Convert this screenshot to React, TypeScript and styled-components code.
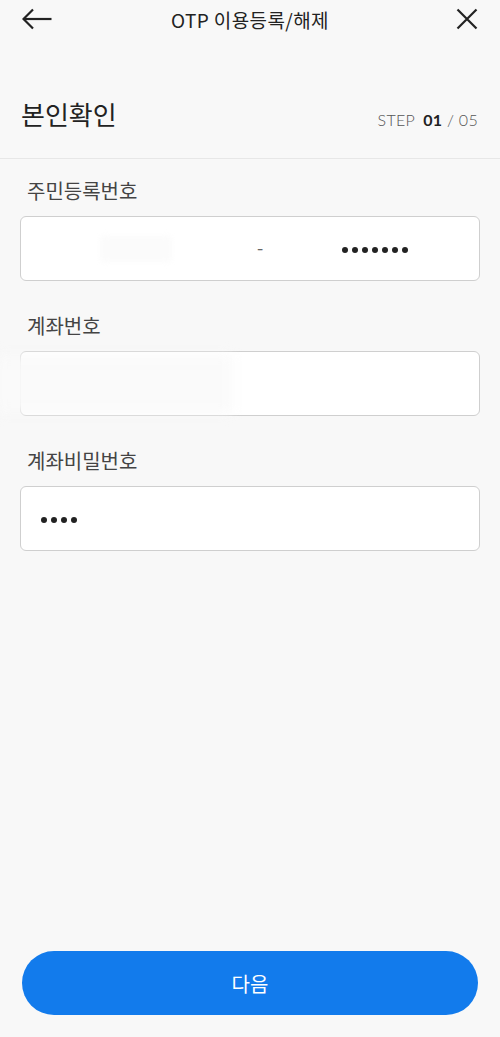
import styled, { createGlobalStyle } from 'styled-components'

const GlobalStyle = createGlobalStyle`
  * { box-sizing: border-box; }
  body {
    margin: 0;
    background: #f8f8f8;
    font-family: 'Noto Sans CJK KR', 'Noto Sans', sans-serif;
    color: #222;
  }
`

const Page = styled.div`
  min-height: 100vh;
  display: flex;
  flex-direction: column;
`

const Header = styled.header`
  height: 38px;
  display: grid;
  grid-template-columns: 1fr auto 1fr;
  align-items: center;
  padding: 0 22px;
`

const IconButton = styled.button<{ right?: boolean }>`
  border: 0;
  background: none;
  padding: 0;
  display: flex;
  justify-self: ${({ right }) => (right ? 'end' : 'start')};
  color: #222;
`

const Title = styled.h1`
  margin: 0;
  font-size: 19px;
  font-weight: 400;
  letter-spacing: 0.4px;
`

const TitleRow = styled.div`
  height: 121px;
  display: flex;
  align-items: flex-end;
  justify-content: space-between;
  padding: 0 22px 27px 21px;
  border-bottom: 1px solid #e7e7e7;
`

const PageTitle = styled.h2`
  margin: 0;
  font-size: 26px;
  font-weight: 400;
  line-height: 34px;
`

const Step = styled.span`
  font-family: 'Lato', 'Noto Sans', sans-serif;
  font-size: 16px;
  font-weight: 300;
  letter-spacing: 0.3px;
  color: #555;
  line-height: 20px;
  margin-bottom: 1px;

  & b {
    color: #222;
    font-weight: 700;
    margin-left: 8px;
  }
`

const Form = styled.div`
  padding: 19px 20px 0;
  display: flex;
  flex-direction: column;
  gap: 32px;
`

const Field = styled.div`
  display: flex;
  flex-direction: column;
  gap: 12px;
`

const Label = styled.label`
  font-size: 20px;
  line-height: 26px;
  color: #444;
  padding-left: 7px;
`

const InputBox = styled.div<{ split?: boolean }>`
  position: relative;
  height: 65px;
  background: #fff;
  border: 1px solid #cfcfcf;
  border-radius: 6px;
  display: ${({ split }) => (split ? 'grid' : 'flex')};
  grid-template-columns: 229px 20px 1fr;
  align-items: center;
  padding: ${({ split }) => (split ? '0' : '0 20px')};
`

const Cell = styled.div`
  display: flex;
  justify-content: center;
  align-items: center;
`

const Dash = styled.span`
  text-align: center;
  color: #666;
  font-size: 18px;
  margin-top: -4px;
`

const Masked = styled.span`
  width: 72px;
  height: 26px;
  border-radius: 4px;
  background: #fbfbfb;
  filter: blur(3px);
`

const Dots = styled.span`
  display: flex;
  gap: 4px;
  margin-top: 3px;
`

const Dot = styled.span`
  width: 6px;
  height: 6px;
  border-radius: 50%;
  background: #222;
`

const Smear = styled.div`
  position: absolute;
  left: -24px;
  top: 3px;
  width: 235px;
  height: 58px;
  background: rgba(250, 250, 250, 0.9);
  filter: blur(6px);
`

const Footer = styled.div`
  margin-top: auto;
  padding: 0 22px 22px;
`

const NextButton = styled.button`
  width: 100%;
  height: 64px;
  border: 0;
  border-radius: 32px;
  background: #127bec;
  color: #fff;
  font-family: 'Noto Sans CJK KR', sans-serif;
  font-size: 20px;
  font-weight: 400;
`

const Secret = ({ count }: { count: number }) => (
  <Dots>
    {Array.from({ length: count }).map((_, i) => <Dot key={i} />)}
  </Dots>
)

export default function App() {
  return (
    <Page>
      <GlobalStyle />
      <Header>
        <IconButton aria-label='back'>
          <svg width='30' height='22' viewBox='0 0 30 22' fill='none' stroke='currentColor' strokeWidth='2.2'>
            <path d='M1.5 11H29.5' />
            <path d='M11 1.5L1.5 11L11 20.5' />
          </svg>
        </IconButton>
        <Title>OTP 이용등록/해제</Title>
        <IconButton right aria-label='close'>
          <svg width='22' height='22' viewBox='0 0 22 22' fill='none' stroke='currentColor' strokeWidth='2.2'>
            <path d='M1.5 1.5L20.5 20.5M20.5 1.5L1.5 20.5' />
          </svg>
        </IconButton>
      </Header>
      <TitleRow>
        <PageTitle>본인확인</PageTitle>
        <Step>STEP<b>01</b> / 05</Step>
      </TitleRow>
      <Form>
        <Field>
          <Label>주민등록번호</Label>
          <InputBox split>
            <Cell><Masked /></Cell>
            <Dash>-</Dash>
            <Cell><Secret count={7} /></Cell>
          </InputBox>
        </Field>
        <Field>
          <Label>계좌번호</Label>
          <InputBox>
            <Smear />
          </InputBox>
        </Field>
        <Field>
          <Label>계좌비밀번호</Label>
          <InputBox>
            <Secret count={4} />
          </InputBox>
        </Field>
      </Form>
      <Footer>
        <NextButton>다음</NextButton>
      </Footer>
    </Page>
  )
}
